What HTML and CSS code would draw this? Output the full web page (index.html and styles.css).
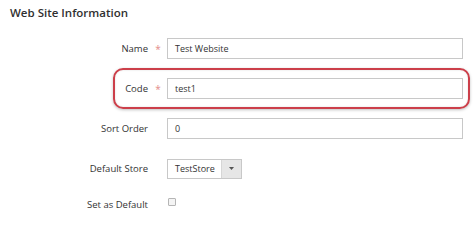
FILE: index.html
```html
<!DOCTYPE html>
<html>
<head>
<meta charset="utf-8">
<link rel="stylesheet" href="styles.css">
</head>
<body>
<div class="page">
  <h2 class="title">Web Site Information</h2>
  <div class="form">
    <div class="row">
      <label class="label">Name</label>
      <span class="req">*</span>
      <div class="input wide">Test Website</div>
    </div>
    <div class="row highlighted">
      <span class="mark"></span>
      <label class="label">Code</label>
      <span class="req">*</span>
      <div class="input wide">test1</div>
    </div>
    <div class="row">
      <label class="label">Sort Order</label>
      <span class="req"></span>
      <div class="input wide">0</div>
    </div>
    <div class="row">
      <label class="label">Default Store</label>
      <span class="req"></span>
      <div class="select">
        <span class="select-value">TestStore</span>
        <span class="select-btn"><svg width="5" height="3" viewBox="0 0 5 3"><path d="M0 0H5L2.5 3Z" fill="#555"/></svg></span>
      </div>
    </div>
    <div class="row check-row">
      <label class="label">Set as Default</label>
      <span class="req"></span>
      <span class="checkbox"></span>
    </div>
  </div>
</div>
</body>
</html>
```
FILE: styles.css
```css
html, body {
  margin: 0;
  padding: 0;
  background: #ffffff;
}
.page {
  width: 474px;
  height: 217px;
  overflow: hidden;
  font-family: "Open Sans", "Liberation Sans", sans-serif;
  color: #333333;
}
.title {
  margin: 0;
  padding: 3px 0 0 10px;
  font-size: 11.5px;
  font-weight: 600;
  font-stretch: 90%;
  line-height: 20px;
  color: #303030;
}
.form {
  display: flex;
  flex-direction: column;
  gap: 19px;
  padding-top: 15px;
}
.row {
  display: flex;
  align-items: center;
  height: 21px;
  position: relative;
}
.label {
  width: 148px;
  text-align: right;
  font-size: 9.5px;
  font-stretch: 92%;
  color: #333333;
}
.req {
  width: 19px;
  text-align: center;
  color: #e38b8b;
  font-size: 10px;
  padding-left: 1px;
  box-sizing: border-box;
}
.input {
  box-sizing: border-box;
  height: 21px;
  border: 1px solid #c8c8c8;
  padding: 0 7px;
  font-size: 9px;
  font-stretch: 92%;
  line-height: 19px;
  color: #333333;
}
.wide {
  width: 296px;
}
.highlighted .mark {
  position: absolute;
  left: 113px;
  top: -10px;
  width: 357px;
  height: 41px;
  box-sizing: border-box;
  border: 2px solid #cc3f4a;
  border-radius: 10px;
  box-shadow: 0 1px 3px rgba(0,0,0,0.25), inset 0 0 2px rgba(0,0,0,0.15);
}
.select {
  display: flex;
  box-sizing: border-box;
  width: 75px;
  height: 20px;
  border: 1px solid #c8c8c8;
  font-size: 9px;
  font-stretch: 92%;
}
.select-value {
  flex: 1;
  padding-left: 7px;
  line-height: 18px;
  color: #333333;
}
.select-btn {
  width: 19px;
  background: #e6e6e6;
  border-left: 1px solid #d6d6d6;
  display: flex;
  align-items: center;
  justify-content: center;
}
.check-row {
  align-items: flex-start;
}
.check-row .label {
  padding-top: 0;
}
.checkbox {
  display: block;
  width: 6px;
  height: 6px;
  margin-left: 1px;
  border: 1px solid #b5b5b5;
  border-radius: 1px;
  background: #f4f4f4;
}
```
